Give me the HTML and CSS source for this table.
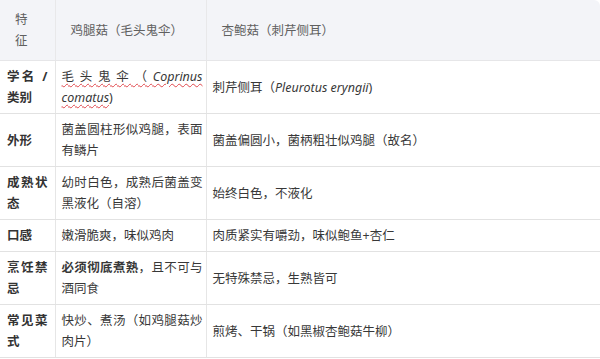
FILE: index.html
```html
<!DOCTYPE html>
<html lang="zh">
<head>
<meta charset="utf-8">
<link rel="stylesheet" href="styles.css">
</head>
<body>
<table class="cmp">
  <colgroup>
    <col class="c1">
    <col class="c2">
    <col class="c3">
  </colgroup>
  <thead>
    <tr>
      <th>特征</th>
      <th>鸡腿菇（毛头鬼伞）</th>
      <th>杏鲍菇（刺芹侧耳）</th>
    </tr>
  </thead>
  <tbody>
    <tr>
      <td class="k">学名 / 类别</td>
      <td><span class="sp">毛头鬼伞（<i>Coprinus comatus</i></span>)</td>
      <td>刺芹侧耳（<i>Pleurotus eryngii</i>)</td>
    </tr>
    <tr>
      <td class="k">外形</td>
      <td>菌盖圆柱形似鸡腿，表面有鳞片</td>
      <td>菌盖偏圆小，菌柄粗壮似鸡腿（故名）</td>
    </tr>
    <tr>
      <td class="k">成熟状态</td>
      <td>幼时白色，成熟后菌盖变黑液化（自溶）</td>
      <td>始终白色，不液化</td>
    </tr>
    <tr>
      <td class="k">口感</td>
      <td>嫩滑脆爽，味似鸡肉</td>
      <td>肉质紧实有嚼劲，味似鲍鱼+杏仁</td>
    </tr>
    <tr>
      <td class="k">烹饪禁忌</td>
      <td><b>必须彻底煮熟</b>，且不可与酒同食</td>
      <td>无特殊禁忌，生熟皆可</td>
    </tr>
    <tr>
      <td class="k">常见菜式</td>
      <td>快炒、煮汤（如鸡腿菇炒肉片）</td>
      <td>煎烤、干锅（如黑椒杏鲍菇牛柳）</td>
    </tr>
  </tbody>
</table>
</body>
</html>
```
FILE: styles.css
```css
html, body {
  margin: 0;
  padding: 0;
  background: #ffffff;
}
body {
  font-family: "Noto Sans", "Noto Sans CJK SC", sans-serif;
  font-size: 12.5px;
  color: #383838;
}
.cmp {
  width: 600px;
  table-layout: fixed;
  border-collapse: collapse;
}
.c1 { width: 55px; }
.c2 { width: 151px; }
.c3 { width: auto; }
.cmp th {
  background: #f3f4f8;
  color: #606060;
  font-weight: normal;
  text-align: left;
  padding: 9px 15px 9px 15px;
  line-height: 21px;
  border-bottom: 1px solid #e6e6e8;
  border-left: 1px solid #e8e8ea;
}
.cmp th:first-child { border-left: none; }
.cmp th:last-child { border-top-right-radius: 6px; }
.cmp td {
  padding: 5px 3px 5px 6px;
  line-height: 21px;
  text-align: justify;
  vertical-align: middle;
  border-bottom: 1px solid #e2e2e2;
  border-left: 1px solid #e6e6e6;
}
.cmp td:first-child { border-left: none; padding-left: 7px; padding-right: 7px; }
.cmp tbody tr:first-child td { height: 42px; }
.cmp td.k {
  font-weight: bold;
  color: #333333;
}
.cmp i {
  font-style: italic;
}
.sp {
  text-decoration: underline wavy #e0474c;
  text-decoration-thickness: 1px;
  text-underline-offset: 2px;
}
```
